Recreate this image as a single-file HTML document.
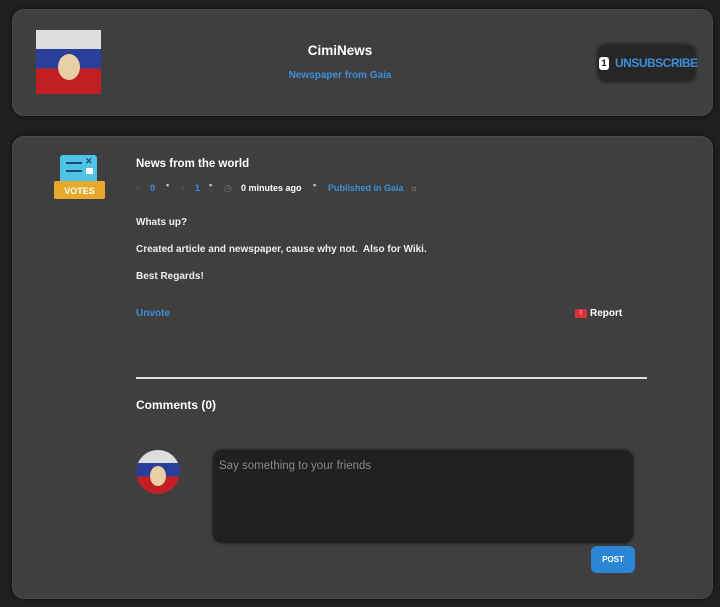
<!DOCTYPE html>
<html><head><style>
*{box-sizing:border-box;margin:0;padding:0}
body{width:720px;height:607px;background:#1f1f1f;font-family:"Liberation Sans",sans-serif;position:relative;overflow:hidden;color:#fff}
.card{position:absolute;left:12px;width:701px;background:#3f3f3f;border-radius:12px;box-shadow:0 0 4px rgba(0,0,0,.6);border:1px solid #4a4a4a}
.abs{position:absolute}
.b{font-weight:bold}
.blue{color:#3d8fd9}
</style></head><body>
<div class="card" style="top:9px;height:107px">
  <div class="abs" style="left:23px;top:20px;width:65px;height:64px;background:linear-gradient(#ddd 0 30%,#2a3f9a 30% 60%,#c21f24 60%)">
    <div class="abs" style="left:22px;top:24px;width:22px;height:26px;border-radius:50%;background:#e8cfa5"></div>
  </div>
  <div class="abs b" style="left:227px;width:200px;text-align:center;top:33px;font-size:13.5px">CimiNews</div>
  <div class="abs b blue" style="left:227px;width:200px;text-align:center;top:60px;font-size:10px">Newspaper from Gaia</div>
  <div class="abs" style="left:585px;top:35px;width:97px;height:36px;background:#262626;border-radius:8px;box-shadow:0 0 4px #111"></div>
  <div class="abs b" style="left:586px;top:47px;width:10px;height:13px;background:#fff;border-radius:3px;color:#000;font-size:9px;text-align:center;line-height:13px">1</div>
  <div class="abs b blue" style="left:602px;top:46px;font-size:12px;letter-spacing:-0.5px">UNSUBSCRIBE</div>
</div>
<div class="card" style="top:136px;height:463px">
  <div class="abs" style="left:47px;top:18px;width:37px;height:30px;background:#4fc3e8;border-radius:3px"></div>
  <div class="abs" style="left:53px;top:25px;width:16px;height:2px;background:#1a4d6b"></div>
  <div class="abs" style="left:53px;top:33px;width:16px;height:2px;background:#1a4d6b"></div>
  <div class="abs" style="left:73px;top:31px;width:7px;height:6px;background:#fff"></div>
  <div class="abs b" style="left:72px;top:19px;font-size:9px;color:#1a4d6b">✕</div>
  <div class="abs b" style="left:41px;top:44px;width:51px;height:18px;background:#e6a92c;border-radius:2px;font-size:9px;text-align:center;line-height:20px">VOTES</div>
  <div class="abs b" style="left:123px;top:21px;font-size:11.5px">News from the world</div>
  <div class="abs b" style="left:123px;top:46px;font-size:9px;white-space:nowrap;height:14px;width:400px">
    <span class="abs" style="left:0;color:#555">▪</span>
    <span class="abs blue" style="left:14px">0</span>
    <span class="abs" style="left:30px;top:-3px;color:#ccc">•</span>
    <span class="abs" style="left:45px;color:#555">▪</span>
    <span class="abs blue" style="left:59px">1</span>
    <span class="abs" style="left:73px;top:-3px;color:#ccc">•</span>
    <span class="abs" style="left:88px;color:#666">◷</span>
    <span class="abs" style="left:105px">0 minutes ago</span>
    <span class="abs" style="left:177px;top:-3px;color:#ccc">•</span>
    <span class="abs blue" style="left:192px">Published in Gaia</span>
    <span class="abs" style="left:274px;color:#aaa">☼</span>
  </div>
  <div class="abs b" style="left:123px;top:72px;font-size:10px;line-height:27px;color:#eee">Whats up?<br>Created article and newspaper, cause why not.&nbsp; Also for Wiki.<br>Best Regards!</div>
  <div class="abs b blue" style="left:123px;top:171px;font-size:10px">Unvote</div>
  <div class="abs" style="left:562px;top:172px;width:12px;height:9px;background:#d9303a;border-radius:1px;font-size:7px;text-align:center;line-height:9px">!</div>
  <div class="abs b" style="left:577px;top:171px;font-size:10px">Report</div>
  <div class="abs" style="left:123px;top:240px;width:511px;height:2px;background:#ddd"></div>
  <div class="abs b" style="left:123px;top:261px;font-size:12px">Comments (0)</div>
  <div class="abs" style="left:123px;top:313px;width:44px;height:44px;border-radius:50%;background:linear-gradient(#ddd 0 30%,#2a3f9a 30% 60%,#c21f24 60%);overflow:hidden">
    <div class="abs" style="left:14px;top:16px;width:16px;height:20px;border-radius:50%;background:#e8cfa5"></div>
  </div>
  <div class="abs" style="left:200px;top:313px;width:420px;height:93px;background:#202020;border-radius:10px;box-shadow:0 0 3px #111;color:#8a8a8a;font-size:11.5px;padding:10px 6px">Say something to your friends</div>
  <div class="abs b" style="left:578px;top:409px;width:44px;height:27px;background:#2b87d6;border-radius:6px;font-size:8px;text-align:center;line-height:27px">POST</div>
</div>
</body></html>
